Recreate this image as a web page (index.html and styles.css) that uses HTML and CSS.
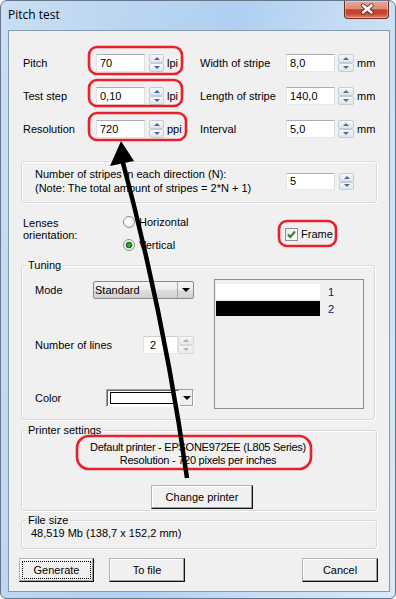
FILE: index.html
```html
<!DOCTYPE html>
<html>
<head>
<meta charset="utf-8">
<link rel="stylesheet" href="styles.css">
</head>
<body>
<div class="window">
  <div class="titlebar">
    <span class="title">Pitch test</span>
    <div class="close">
      <svg width="45" height="18" viewBox="0 0 45 18">
        <path d="M19 5.5 L27.5 12.5 M27.5 5.5 L19 12.5" stroke="#4a160e" stroke-opacity="0.75" stroke-width="4.4" stroke-linecap="round" fill="none"/>
        <path d="M19 5.5 L27.5 12.5 M27.5 5.5 L19 12.5" stroke="#ffffff" stroke-width="2.6" stroke-linecap="round" fill="none"/>
      </svg>
    </div>
  </div>
  <div class="client">
    <div class="params">
      <div class="col col-left">
        <div class="field"><span class="lbl">Pitch</span><span class="edit">70</span><span class="spin"><span class="sb up"></span><span class="sb dn"></span></span><span class="unit">lpi</span></div>
        <div class="field"><span class="lbl">Test step</span><span class="edit">0,10</span><span class="spin"><span class="sb up"></span><span class="sb dn"></span></span><span class="unit">lpi</span></div>
        <div class="field"><span class="lbl">Resolution</span><span class="edit">720</span><span class="spin"><span class="sb up"></span><span class="sb dn"></span></span><span class="unit">ppi</span></div>
      </div>
      <div class="col col-right">
        <div class="field"><span class="lbl">Width of stripe</span><span class="edit">8,0</span><span class="spin"><span class="sb up"></span><span class="sb dn"></span></span><span class="unit">mm</span></div>
        <div class="field"><span class="lbl">Length of stripe</span><span class="edit">140,0</span><span class="spin"><span class="sb up"></span><span class="sb dn"></span></span><span class="unit">mm</span></div>
        <div class="field"><span class="lbl">Interval</span><span class="edit">5,0</span><span class="spin"><span class="sb up"></span><span class="sb dn"></span></span><span class="unit">mm</span></div>
      </div>
    </div>

    <div class="group stripes">
      <div class="stripes-text">Number of stripes in each direction (N):<br>(Note: The total amount of stripes = 2*N + 1)</div>
      <span class="edit">5</span><span class="spin"><span class="sb up"></span><span class="sb dn"></span></span>
    </div>

    <div class="orient">
      <div class="orient-lbl">Lenses<br>orientation:</div>
      <div class="radios">
        <div class="radio"><span class="rb"></span><span>Horizontal</span></div>
        <div class="radio"><span class="rb on"></span><span>Vertical</span></div>
      </div>
      <div class="check">
        <span class="cb"><svg width="11" height="11" viewBox="0 0 11 11"><path d="M2 5.5 L4.3 8 L9 2.5" stroke="#1f8a24" stroke-width="2" fill="none"/></svg></span>
        <span>Frame</span>
      </div>
    </div>

    <div class="group tuning">
      <div class="group-title">Tuning</div>
      <div class="tuning-body">
        <div class="tuning-left">
          <div class="trow mode-row">
            <span class="tl mode-l">Mode</span>
            <div class="combo"><span class="combo-text">Standard</span><span class="combo-arrow"></span></div>
          </div>
          <div class="trow lines-row">
            <span class="tl lines-l">Number of lines</span>
            <span class="edit dis">2</span><span class="spin dspin"><span class="sb up"></span><span class="sb dn"></span></span>
          </div>
          <div class="trow color-row">
            <span class="tl color-l">Color</span>
            <div class="ccombo"><span class="swatch"></span><span class="carrow"></span></div>
          </div>
        </div>
        <div class="preview">
          <div class="pv-row"><span class="bar white"></span><span class="pv-num">1</span></div>
          <div class="pv-row"><span class="bar black"></span><span class="pv-num">2</span></div>
        </div>
      </div>
    </div>

    <div class="group printer">
      <div class="group-title">Printer settings</div>
      <div class="pr-text">Default printer - EPSONE972EE (L805 Series)<br>Resolution - 720 pixels per inches</div>
      <div class="btn change">Change printer</div>
    </div>

    <div class="group filesize">
      <div class="group-title">File size</div>
      <div class="fs-text">48,519 Mb (138,7 x 152,2 mm)</div>
    </div>

    <div class="buttons">
      <div class="btn focus"><span class="focus-rect">Generate</span></div>
      <div class="btn tofile">To file</div>
      <div class="btn cancel">Cancel</div>
    </div>
  </div>

  <svg class="annot" width="396" height="599" viewBox="0 0 396 599">
    <g fill="none" stroke="#e8202b" stroke-width="2.6">
      <rect x="89" y="47" width="93" height="27" rx="8"/>
      <rect x="89" y="80" width="93" height="26" rx="8"/>
      <rect x="89" y="113" width="97" height="27" rx="8"/>
      <rect x="279" y="221" width="57" height="25" rx="8"/>
      <rect x="77" y="436" width="234" height="33" rx="12"/>
    </g>
    <path d="M187 478 Q165 320 121 155" stroke="#000" stroke-width="4.5" fill="none"/>
    <polygon points="121,141 110,166 134,161" fill="#000"/>
  </svg>
</div>
</body>
</html>
```
FILE: styles.css
```css
* { box-sizing: border-box; }
html, body { margin: 0; padding: 0; }
body {
  width: 396px; height: 599px; overflow: hidden;
  font-family: "Liberation Sans", Arial, sans-serif;
  font-size: 11px; color: #000; background: #fff;
}
.window {
  position: relative;
  width: 396px; height: 599px;
  border: 1px solid #66768a;
  border-radius: 7px 7px 6px 6px;
  background: linear-gradient(100deg, #cadff3 0%, #b9d5f1 28%, #afd0f2 48%, #c6dcf4 70%, #d9e8f7 100%);
  overflow: hidden;
}
.titlebar {
  height: 29px;
  display: flex; justify-content: space-between; align-items: flex-start;
  padding: 0 6px 0 7px;
}
.title {
  font-family: "Open Sans", "Noto Sans", sans-serif;
  font-size: 12px; line-height: 16px; margin-top: 6px; color: #000;
}
.close {
  width: 45px; height: 18px;
  border: 1px solid #6d2c20; border-top: none;
  border-radius: 0 0 4px 4px;
  background: linear-gradient(#e9a898 0%, #dc8c78 45%, #c2412c 52%, #c5452d 72%, #dd8466 100%);
  box-shadow: inset 0 0 0 1px rgba(255,255,255,0.35);
}
.close svg { display: block; margin: -1px 0 0 -1px; }

.client {
  margin: 0 5px 0 7px;
  height: 562px;
  border: 1px solid #8799ad;
  background: #f0f0f0;
}

/* params */
.params { display: flex; padding: 23px 0 0 14px; }
.col { display: flex; flex-direction: column; gap: 15px; }
.col-left { width: 177px; }
.field { display: flex; align-items: center; height: 18px; }
.lbl { white-space: nowrap; }
.col-left .lbl { width: 73px; }
.col-right .lbl { width: 86px; }
.edit {
  display: block;
  width: 49px; height: 18px;
  border: 1px solid; border-color: #abadb3 #dbdfe6 #e3e9ef #e2e3ea;
  background: #fff; padding-left: 3px; line-height: 16px;
  white-space: nowrap;
}
.spin { display: flex; flex-direction: column; width: 15px; height: 18px; margin-left: 4px; }
.col-right .spin { margin-left: 3px; width: 16px; }
.sb {
  flex: 1;
  border: 1px solid #c5ccd6; border-radius: 2px;
  background: linear-gradient(#f7f9fb, #dfe5ec);
  display: flex; align-items: center; justify-content: center;
}
.sb::after { content: ""; width: 0; height: 0; border-left: 3px solid transparent; border-right: 3px solid transparent; }
.up::after { border-bottom: 3px solid #4a6b9c; }
.dn::after { border-top: 3px solid #4a6b9c; }
.unit { margin-left: 3px; }

/* groups */
.group {
  border: 1px solid #d5dadf;
  border-radius: 3px;
  box-shadow: inset 1px 1px 0 #fff, 1px 1px 0 #fff;
}
.group-title {
  display: table;
  margin: -7px 0 0 4px; padding: 0 2px;
  background: #f0f0f0; line-height: 13px;
}

.stripes {
  margin: 23px 0 0 12px; width: 356px; height: 42px;
  display: flex; align-items: flex-start; padding: 5px 0 0 13px;
}
.stripes-text { width: 251px; line-height: 14px; white-space: nowrap; }
.stripes .edit { margin-top: 6px; height: 17px; line-height: 15px; }
.stripes .spin { margin-top: 6px; height: 17px; margin-left: 4px; }

/* orientation */
.orient { display: flex; align-items: flex-start; height: 62px; padding-left: 14px; }
.orient-lbl { width: 100px; margin-top: 14px; line-height: 12px; }
.radios { width: 162px; margin-top: 8px; display: flex; flex-direction: column; gap: 1px; }
.radio { height: 22px; display: flex; align-items: center; }
.rb {
  width: 12px; height: 12px; border-radius: 50%;
  border: 1px solid #8e8f8f; margin-right: 4px;
  background: radial-gradient(circle at 40% 35%, #ffffff 0, #f4f4f4 50%, #dcdcdc 100%);
}
.rb.on {
  background: radial-gradient(circle at 50% 50%, #48bd48 0, #1d8a1d 2.2px, #0f5e12 3.2px, rgba(255,255,255,0) 3.6px),
              radial-gradient(circle at 40% 35%, #ffffff 0, #f4f4f4 50%, #dcdcdc 100%);
}
.check { margin-top: 24px; display: flex; align-items: center; height: 14px; }
.cb {
  width: 13px; height: 13px; border: 1px solid #8e8f8f; margin-right: 3px;
  background: linear-gradient(135deg, #e9e9e9, #ffffff);
  display: flex; align-items: center; justify-content: center;
}
.cb svg { display: block; }

/* tuning */
.tuning { margin-left: 12px; width: 354px; }
.tuning-body { display: flex; padding: 7px 9px 10px 13px; }
.tuning-left { width: 159px; margin-right: 20px; }
.trow { display: flex; align-items: center; height: 18px; }
.mode-row { margin-top: 2px; }
.lines-row { margin-top: 37px; }
.color-row { margin-top: 35px; }
.mode-l { width: 58px; }
.lines-l { width: 108px; }
.color-l { width: 71px; }
.combo {
  width: 101px; height: 18px;
  border: 1px solid #8a8a8a; border-radius: 2px;
  background: linear-gradient(#f4f4f4 0%, #ececec 48%, #dedede 52%, #d2d2d2 100%);
  display: flex; align-items: center; padding-left: 1px;
}
.combo-text { flex: 1; }
.combo-arrow {
  width: 16px; height: 16px; border-left: 1px solid #a8a8a8;
  display: flex; align-items: center; justify-content: center;
}
.combo-arrow::after { content: ""; border-left: 4px solid transparent; border-right: 4px solid transparent; border-top: 4px solid #000; }
.edit.dis { width: 35px; border-color: #cfcfcf #e3e3e3 #e6e6e6 #e3e3e3; padding-left: 6px; }
.dspin { width: 16px; margin-left: 0; }
.dspin .sb { border-color: #d9d9d9; background: linear-gradient(#f6f6f6, #e9e9e9); }
.dspin .up::after { border-bottom-color: #b0b0b0; }
.dspin .dn::after { border-top-color: #b0b0b0; }
.ccombo {
  width: 88px; height: 18px; background: #fff;
  border: 1px solid; border-color: #a0a0a0 #ffffff #ffffff #a0a0a0;
  box-shadow: inset 1px 1px 0 #696969;
  display: flex; align-items: center; padding-left: 3px;
}
.swatch { width: 64px; height: 12px; border: 1px solid #000; background: #fff; }
.carrow {
  margin-left: auto; width: 14px; height: 16px;
  background: #f0f0f0; border-left: 1px solid #fff;
  box-shadow: inset -1px -1px 0 #a0a0a0;
  display: flex; align-items: center; justify-content: center;
}
.carrow::after { content: ""; border-left: 4px solid transparent; border-right: 4px solid transparent; border-top: 4px solid #000; }
.preview { width: 150px; height: 130px; border: 1px solid #8a8d92; padding: 4px 0 0 1px; }
.pv-row { display: flex; align-items: center; height: 15px; margin-bottom: 2px; }
.bar { width: 104px; height: 15px; }
.bar.white { background: #fff; }
.bar.black { background: #000; }
.pv-num { margin-left: 8px; color: #0a1a5c; }

/* printer */
.printer { margin: 10px 0 0 12px; width: 356px; padding-bottom: 1px; }
.pr-text { margin-top: 4px; line-height: 13px; text-align: center; white-space: nowrap; letter-spacing: -0.25px; padding-right: 2px; }
.btn {
  height: 24px; background: #f0f0f0;
  border: 1px solid; border-color: #b4b4b4 #101010 #101010 #b4b4b4;
  box-shadow: inset -1px -1px 0 #a0a0a0, inset 1px 1px 0 #ffffff;
  display: flex; align-items: center; justify-content: center;
}
.change { width: 102px; margin: 18px 0 0 129px; }

/* file size */
.filesize { margin: 9px 0 0 12px; width: 356px; padding-bottom: 8px; }
.fs-text { padding-left: 9px; line-height: 13px; }

/* buttons */
.buttons { display: flex; margin-top: 9px; padding: 0 11px 0 10px; }
.buttons .btn { width: 75px; }
.tofile { margin-left: 15px; width: 76px !important; }
.cancel { margin-left: auto; width: 76px !important; }
.focus { padding: 2px; }
.focus-rect {
  flex: 1; align-self: stretch;
  border: 1px dotted #000;
  display: flex; align-items: center; justify-content: center;
}

.annot { position: absolute; top: -1px; left: -1px; pointer-events: none; }
```
